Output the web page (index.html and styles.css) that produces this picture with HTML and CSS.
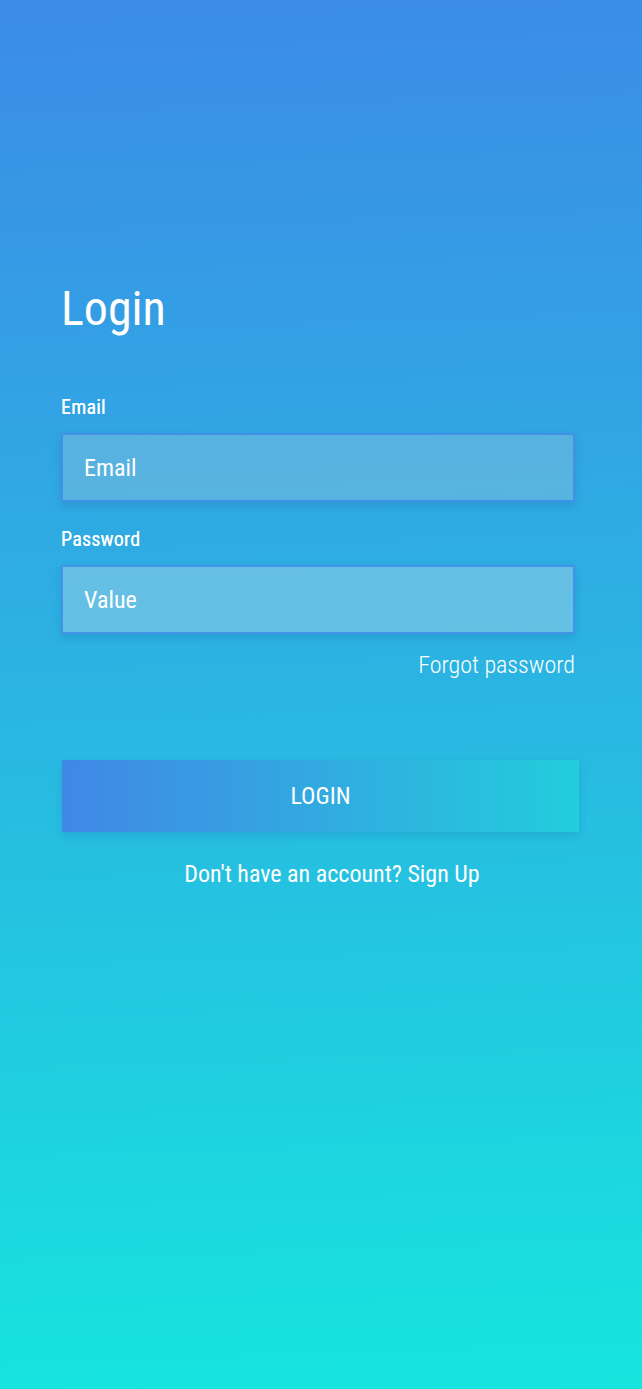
FILE: index.html
```html
<!DOCTYPE html>
<html lang="en">
<head>
    <meta charset="UTF-8">
    <meta name="viewport" content="width=device-width, initial-scale=1.0">
    <title>Login</title>
    <link rel="stylesheet" href="styles.css">
</head>
<body>
    <div class="screen">
        <form class="login-form" onsubmit="return false;">
            <h1 class="title">Login</h1>

            <label class="field-label" for="email">Email</label>
            <input class="field" id="email" type="email" placeholder="Email">

            <label class="field-label password-label" for="password">Password</label>
            <input class="field field-filled" id="password" type="text" value="Value">

            <div class="forgot-row">
                <a class="forgot" href="#">Forgot password</a>
            </div>

            <button class="login-btn" type="submit">LOGIN</button>

            <p class="signup">Don't have an account? Sign Up</p>
        </form>
    </div>
</body>
</html>
```

FILE: styles.css
```css
html,
body {
    margin: 0;
    height: 100%;
}

body {
    font-family: "Roboto Condensed", Roboto, Arial, sans-serif;
    color: #fff;
    background: linear-gradient(178deg, #3c8be7 0%, #2bb3e2 48%, #16e5de 100%);
    min-height: 1389px;
}

.screen {
    padding: 280px 67px 0 61px;
}

.login-form {
    display: flex;
    flex-direction: column;
}

.title {
    margin: 0;
    font-size: 48px;
    line-height: 58px;
    font-weight: 400;
}

.field-label {
    margin-top: 58px;
    font-size: 20px;
    line-height: 23px;
    font-weight: 400;
    letter-spacing: 0.2px;
    text-shadow: 0 0 0.4px #fff;
}

.password-label {
    margin-top: 26px;
}

.field {
    margin-top: 14px;
    height: 69px;
    box-sizing: border-box;
    padding: 0 21px;
    border: 2px solid rgba(61, 140, 231, 0.85);
    background: rgba(205, 212, 218, 0.26);
    box-shadow: 0 4px 8px rgba(20, 70, 140, 0.18);
    font-family: inherit;
    font-size: 24px;
    color: #fff;
    outline: none;
}

.field-filled {
    background: rgba(222, 228, 232, 0.32);
}

.field::placeholder {
    color: #fff;
    opacity: 1;
}

.forgot-row {
    margin-top: 17px;
    text-align: right;
    font-size: 24px;
    line-height: 28px;
    font-weight: 300;
}

.forgot {
    color: #fff;
    text-decoration: none;
}

.login-btn {
    margin: 81px -4px 0 1px;
    height: 72px;
    border: none;
    background: linear-gradient(to right, #4187e5, #22cddc);
    box-shadow: 0 4px 8px rgba(20, 70, 140, 0.15);
    font-family: inherit;
    font-size: 24px;
    color: #fff;
    cursor: pointer;
}

.signup {
    margin: 28px 0 0;
    padding-left: 28px;
    text-align: center;
    font-size: 24px;
    line-height: 28px;
}
```
